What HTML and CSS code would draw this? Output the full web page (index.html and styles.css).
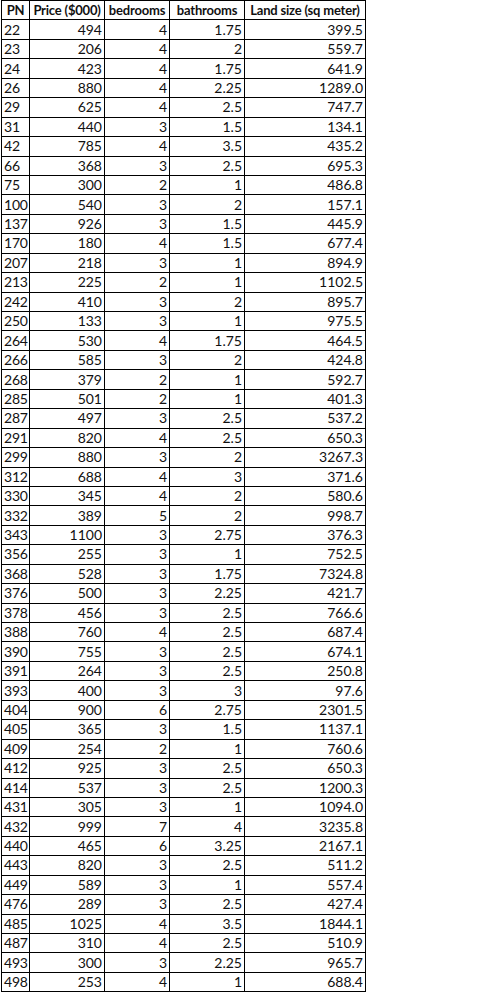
FILE: index.html
```html
<!DOCTYPE html>
<html>
<head>
<meta charset="utf-8">
<link rel="stylesheet" href="styles.css">
</head>
<body>
<table class="sheet">
<colgroup>
<col class="c-pn"><col class="c-price"><col class="c-bed"><col class="c-bath"><col class="c-land">
</colgroup>
<thead>
<tr><th>PN</th><th>Price ($000)</th><th>bedrooms</th><th>bathrooms</th><th>Land size (sq meter)</th></tr>
</thead>
<tbody>
<tr><td>22</td><td>494</td><td>4</td><td>1.75</td><td>399.5</td></tr>
<tr><td>23</td><td>206</td><td>4</td><td>2</td><td>559.7</td></tr>
<tr><td>24</td><td>423</td><td>4</td><td>1.75</td><td>641.9</td></tr>
<tr><td>26</td><td>880</td><td>4</td><td>2.25</td><td>1289.0</td></tr>
<tr><td>29</td><td>625</td><td>4</td><td>2.5</td><td>747.7</td></tr>
<tr><td>31</td><td>440</td><td>3</td><td>1.5</td><td>134.1</td></tr>
<tr><td>42</td><td>785</td><td>4</td><td>3.5</td><td>435.2</td></tr>
<tr><td>66</td><td>368</td><td>3</td><td>2.5</td><td>695.3</td></tr>
<tr><td>75</td><td>300</td><td>2</td><td>1</td><td>486.8</td></tr>
<tr><td>100</td><td>540</td><td>3</td><td>2</td><td>157.1</td></tr>
<tr><td>137</td><td>926</td><td>3</td><td>1.5</td><td>445.9</td></tr>
<tr><td>170</td><td>180</td><td>4</td><td>1.5</td><td>677.4</td></tr>
<tr><td>207</td><td>218</td><td>3</td><td>1</td><td>894.9</td></tr>
<tr><td>213</td><td>225</td><td>2</td><td>1</td><td>1102.5</td></tr>
<tr><td>242</td><td>410</td><td>3</td><td>2</td><td>895.7</td></tr>
<tr><td>250</td><td>133</td><td>3</td><td>1</td><td>975.5</td></tr>
<tr><td>264</td><td>530</td><td>4</td><td>1.75</td><td>464.5</td></tr>
<tr><td>266</td><td>585</td><td>3</td><td>2</td><td>424.8</td></tr>
<tr><td>268</td><td>379</td><td>2</td><td>1</td><td>592.7</td></tr>
<tr><td>285</td><td>501</td><td>2</td><td>1</td><td>401.3</td></tr>
<tr><td>287</td><td>497</td><td>3</td><td>2.5</td><td>537.2</td></tr>
<tr><td>291</td><td>820</td><td>4</td><td>2.5</td><td>650.3</td></tr>
<tr><td>299</td><td>880</td><td>3</td><td>2</td><td>3267.3</td></tr>
<tr><td>312</td><td>688</td><td>4</td><td>3</td><td>371.6</td></tr>
<tr><td>330</td><td>345</td><td>4</td><td>2</td><td>580.6</td></tr>
<tr><td>332</td><td>389</td><td>5</td><td>2</td><td>998.7</td></tr>
<tr><td>343</td><td>1100</td><td>3</td><td>2.75</td><td>376.3</td></tr>
<tr><td>356</td><td>255</td><td>3</td><td>1</td><td>752.5</td></tr>
<tr><td>368</td><td>528</td><td>3</td><td>1.75</td><td>7324.8</td></tr>
<tr><td>376</td><td>500</td><td>3</td><td>2.25</td><td>421.7</td></tr>
<tr><td>378</td><td>456</td><td>3</td><td>2.5</td><td>766.6</td></tr>
<tr><td>388</td><td>760</td><td>4</td><td>2.5</td><td>687.4</td></tr>
<tr><td>390</td><td>755</td><td>3</td><td>2.5</td><td>674.1</td></tr>
<tr><td>391</td><td>264</td><td>3</td><td>2.5</td><td>250.8</td></tr>
<tr><td>393</td><td>400</td><td>3</td><td>3</td><td>97.6</td></tr>
<tr><td>404</td><td>900</td><td>6</td><td>2.75</td><td>2301.5</td></tr>
<tr><td>405</td><td>365</td><td>3</td><td>1.5</td><td>1137.1</td></tr>
<tr><td>409</td><td>254</td><td>2</td><td>1</td><td>760.6</td></tr>
<tr><td>412</td><td>925</td><td>3</td><td>2.5</td><td>650.3</td></tr>
<tr><td>414</td><td>537</td><td>3</td><td>2.5</td><td>1200.3</td></tr>
<tr><td>431</td><td>305</td><td>3</td><td>1</td><td>1094.0</td></tr>
<tr><td>432</td><td>999</td><td>7</td><td>4</td><td>3235.8</td></tr>
<tr><td>440</td><td>465</td><td>6</td><td>3.25</td><td>2167.1</td></tr>
<tr><td>443</td><td>820</td><td>3</td><td>2.5</td><td>511.2</td></tr>
<tr><td>449</td><td>589</td><td>3</td><td>1</td><td>557.4</td></tr>
<tr><td>476</td><td>289</td><td>3</td><td>2.5</td><td>427.4</td></tr>
<tr><td>485</td><td>1025</td><td>4</td><td>3.5</td><td>1844.1</td></tr>
<tr><td>487</td><td>310</td><td>4</td><td>2.5</td><td>510.9</td></tr>
<tr><td>493</td><td>300</td><td>3</td><td>2.25</td><td>965.7</td></tr>
<tr><td>498</td><td>253</td><td>4</td><td>1</td><td>688.4</td></tr>
</tbody>
</table>
</body>
</html>
```
FILE: styles.css
```css
html, body {
  margin: 0;
  padding: 0;
  background: #ffffff;
}
.sheet {
  border-collapse: collapse;
  table-layout: fixed;
  width: 364px;
  margin-left: 1px;
  font-family: "Lato", "Liberation Sans", sans-serif;
  font-size: 14px;
  color: #111111;
}
.c-pn { width: 28px; }
.c-price { width: 75px; }
.c-bed { width: 65px; }
.c-bath { width: 75px; }
.c-land { width: 121px; }
.sheet th, .sheet td {
  border: 1px solid #000000;
  height: 18.45px;
  padding: 0 2px;
  line-height: 16px;
  white-space: nowrap;
  overflow: hidden;
}
.sheet th {
  font-weight: bold;
  font-size: 13px;
  letter-spacing: -0.2px;
  text-align: center;
  padding: 0;
}
.sheet td {
  text-align: right;
}
.sheet td:first-child {
  text-align: left;
  padding-left: 2px;
  padding-right: 0;
  letter-spacing: -0.2px;
}
```
